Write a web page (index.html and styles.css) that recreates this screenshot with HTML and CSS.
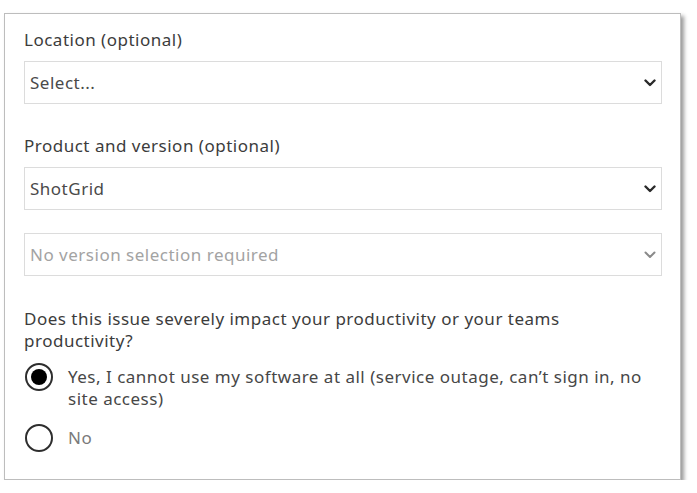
FILE: index.html
```html
<!DOCTYPE html>
<html lang="en">
<head>
<meta charset="utf-8">
<title>Support form</title>
<link rel="stylesheet" href="styles.css">
</head>
<body>
<div class="card">
  <div class="field">
    <div class="label">Location (optional)</div>
    <div class="select">
      <span class="value">Select...</span>
      <svg class="chev" width="12" height="8" viewBox="0 0 12 8"><path d="M1.5 1.5 L6 6 L10.5 1.5" fill="none" stroke="currentColor" stroke-width="2.4" stroke-linecap="round" stroke-linejoin="round"/></svg>
    </div>
  </div>
  <div class="field">
    <div class="label">Product and version (optional)</div>
    <div class="select">
      <span class="value">ShotGrid</span>
      <svg class="chev" width="12" height="8" viewBox="0 0 12 8"><path d="M1.5 1.5 L6 6 L10.5 1.5" fill="none" stroke="currentColor" stroke-width="2.4" stroke-linecap="round" stroke-linejoin="round"/></svg>
    </div>
    <div class="select disabled">
      <span class="value">No version selection required</span>
      <svg class="chev" width="12" height="8" viewBox="0 0 12 8"><path d="M1.5 1.5 L6 6 L10.5 1.5" fill="none" stroke="currentColor" stroke-width="2" stroke-linecap="round" stroke-linejoin="round"/></svg>
    </div>
  </div>
  <div class="question">Does this issue severely impact your productivity or your teams productivity?</div>
  <div class="radios">
    <div class="radio-row">
      <span class="radio checked"><span class="dot"></span></span>
      <span class="radio-text">Yes, I cannot use my software at all (service outage, can’t sign in, no site access)</span>
    </div>
    <div class="radio-row single">
      <span class="radio"></span>
      <span class="radio-text muted">No</span>
    </div>
  </div>
</div>
</body>
</html>
```
FILE: styles.css
```css
html, body {
  margin: 0;
  padding: 0;
  background: #ffffff;
}
body {
  font-family: "Noto Sans", "Open Sans", sans-serif;
  font-size: 17px;
  letter-spacing: 0.5px;
  line-height: 22px;
  color: #3e3e3e;
}
.card {
  box-sizing: border-box;
  width: 677px;
  height: 467px;
  margin: 13px 0 0 4px;
  border: 1px solid #bdbdbd;
  background: #fff;
  box-shadow: 3px 3px 4px rgba(0, 0, 0, 0.4);
  padding: 15px 18px 0 19px;
}
.field {
  display: flex;
  flex-direction: column;
}
.field + .field {
  margin-top: 31px;
}
.label {
  color: #3c3c3c;
}
.select {
  box-sizing: border-box;
  height: 43px;
  margin-top: 10px;
  border: 1.5px solid #dcdcdc;
  display: flex;
  align-items: center;
  justify-content: space-between;
  padding: 0 5px 0 5px;
  color: #4a4a4a;
}
.select + .select {
  margin-top: 23px;
}
.select.disabled {
  color: #a3a3a3;
}
.select.disabled .chev {
  color: #8a8a8a;
}
.chev {
  color: #2a2a2a;
  display: block;
}
.question {
  margin-top: 32px;
  color: #3c3c3c;
}
.radios {
  margin-top: 14px;
  display: flex;
  flex-direction: column;
  gap: 14px;
}
.radio-row {
  display: flex;
  align-items: flex-start;
  gap: 15px;
}
.radio-row.single {
  align-items: center;
}
.radio {
  box-sizing: border-box;
  flex: none;
  width: 28px;
  height: 28px;
  border: 2px solid #2e2e2e;
  border-radius: 50%;
  display: flex;
  align-items: center;
  justify-content: center;
  margin-left: 1px;
}
.radio-row:first-child .radio {
  margin-top: -3px;
}
.dot {
  width: 16px;
  height: 16px;
  border-radius: 50%;
  background: #000;
}
.radio-text {
  color: #474747;
}
.radio-text.muted {
  color: #7a7a7a;
}
```
